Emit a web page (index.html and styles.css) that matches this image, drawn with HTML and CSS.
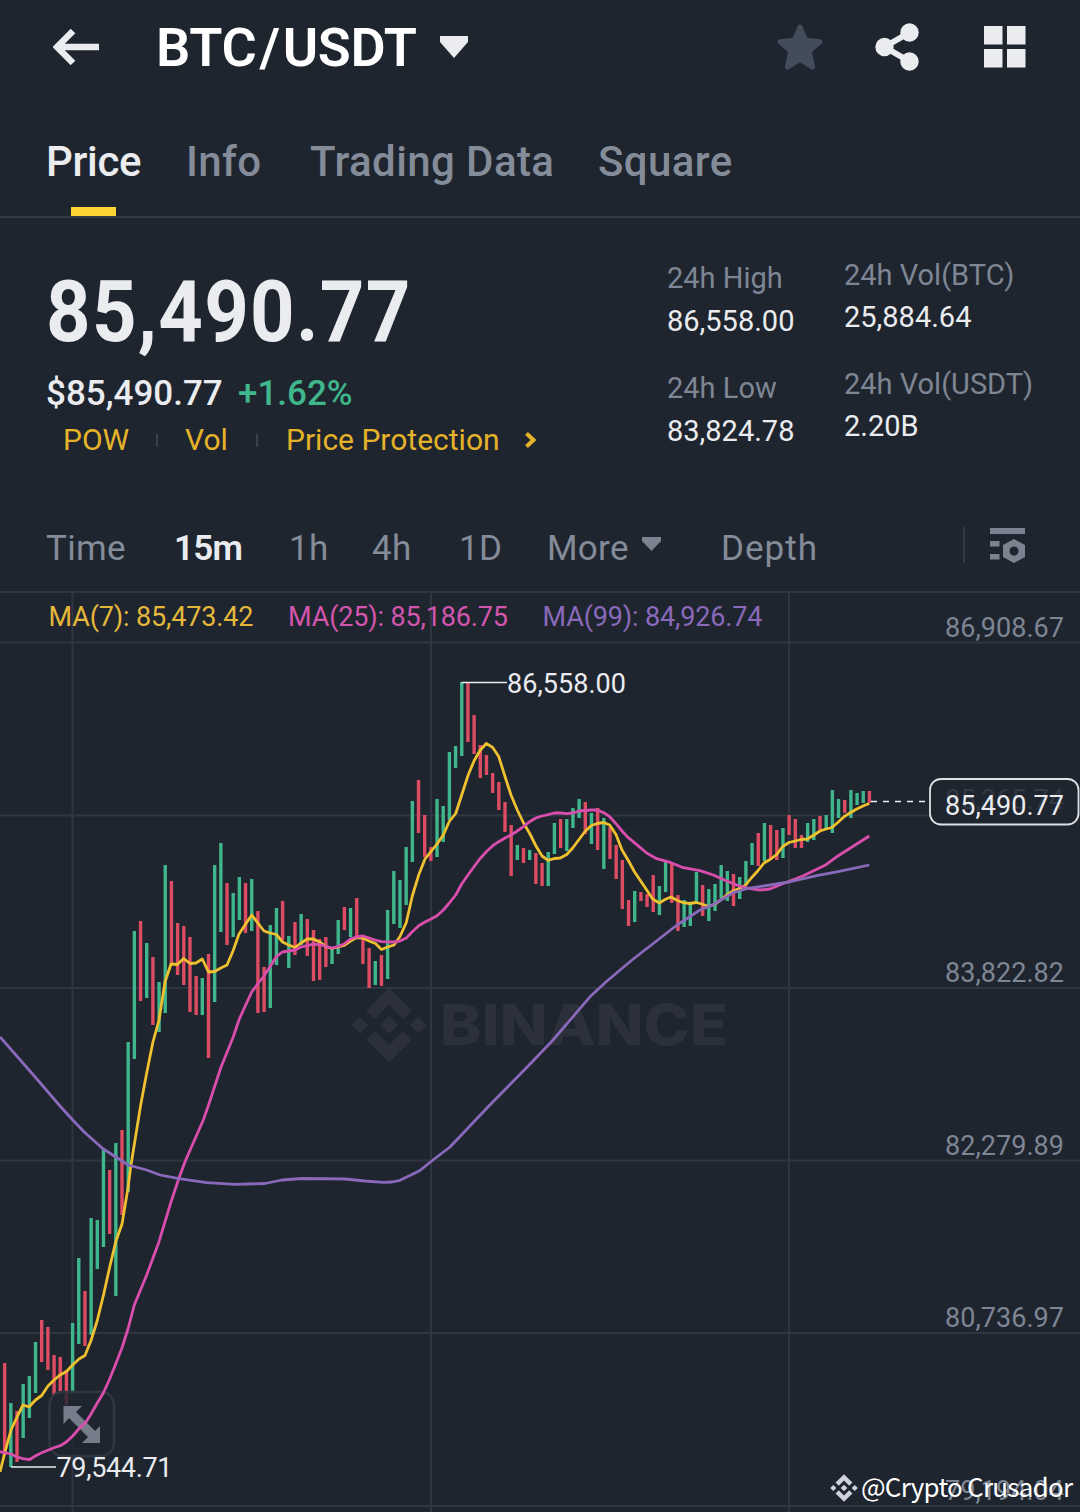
FILE: index.html
```html
<!DOCTYPE html>
<html lang="en">
<head>
    <meta charset="UTF-8">
    <title>BTC/USDT</title>
    <link rel="stylesheet" href="styles.css">
</head>
<body>
    <header class="topbar">
        <svg class="back" width="46" height="38" viewBox="0 0 46 38">
            <path d="M46 19H5M20 3L4 19L20 35" fill="none" stroke="#eaecef" stroke-width="6.5"/>
        </svg>
        <h1 class="pair">BTC<span>/</span>USDT</h1>
        <svg class="caret" width="28" height="22" viewBox="0 0 28 22">
            <path d="M0 0H28V6L14 22L0 6Z" fill="#eaecef"/>
        </svg>
        <div class="actions">
            <svg width="46" height="46" viewBox="0 0 46 46">
                <path d="M23 3L28.6 16.2L43 17.7L32.2 27.2L35.6 43L23 35.4L10.4 43L13.8 27.2L3 17.7L17.4 16.2Z" fill="#434c5a" stroke="#434c5a" stroke-width="5" stroke-linejoin="round"/>
            </svg>
            <svg width="44" height="48" viewBox="0 0 44 48">
                <path d="M34.500 9.500L9.500 24L34.500 38.500" fill="none" stroke="#eaecef" stroke-width="6"/>
                <g fill="#eaecef">
                    <circle cx="34.500" cy="9.500" r="9.200"/>
                    <circle cx="9.500" cy="24" r="9.200"/>
                    <circle cx="34.500" cy="38.500" r="9.200"/>
                </g>
            </svg>
            <svg width="42" height="42" viewBox="0 0 42 42">
                <path d="M0 0H18.500V18.500H0ZM23 0H41.500V18.500H23ZM0 23H18.500V41.500H0ZM23 23H41.500V41.500H23Z" fill="#eaecef"/>
            </svg>
        </div>
    </header>

    <nav class="tabs">
        <a class="tab active">Price</a>
        <a class="tab">Info</a>
        <a class="tab">Trading Data</a>
        <a class="tab">Square</a>
    </nav>

    <section class="summary">
        <div class="quote">
            <div class="last">85,490.77</div>
            <div class="fiat"><span class="usd">$85,490.77</span><span class="change">+1.62%</span></div>
            <div class="tags">
                <span class="pow">POW</span><i></i><span class="vol">Vol</span><i></i><span class="protect">Price Protection</span>
                <svg width="11" height="16" viewBox="0 0 11 16">
                    <path d="M1.500 1.500L8.500 8L1.500 14.500" fill="none" stroke="#e5b32a" stroke-width="4"/>
                </svg>
            </div>
        </div>
        <div class="stats range">
            <div class="stat"><label>24h High</label><b>86,558.00</b></div>
            <div class="stat"><label>24h Low</label><b>83,824.78</b></div>
        </div>
        <div class="stats volume">
            <div class="stat"><label>24h Vol(BTC)</label><b>25,884.64</b></div>
            <div class="stat"><label>24h Vol(USDT)</label><b>2.20B</b></div>
        </div>
    </section>

    <nav class="intervals">
        <a>Time</a>
        <a class="active">15m</a>
        <a>1h</a>
        <a>4h</a>
        <a>1D</a>
        <a class="more">More
            <svg width="19" height="14" viewBox="0 0 19 14"><path d="M0 0H19V4L9.500 14L0 4Z" fill="#7b8290"/></svg>
        </a>
        <a class="depth">Depth</a>
        <span class="settings">
            <svg width="36" height="36" viewBox="0 0 36 36" fill="#7b8290">
                <path d="M0 1H35V7H0ZM0 14H9.500V19.500H0ZM0 27H9.500V32.500H0Z"/>
                <path fill-rule="evenodd" d="M24 12L35 18V30L24 36L13 30V18ZM24 19.500a4.500 4.500 0 1 0 0.010 0Z"/>
            </svg>
        </span>
    </nav>

    <main class="chart">
        <svg width="1080" height="921" viewBox="0 591 1080 921">
            <path class="grid" d="M0 592H1080M0 642.500H1080M0 815.500H1080M0 988H1080M0 1160.500H1080M0 1333H1080M0 1506H1080M72.500 591V1512M431 591V1512M789 591V1512"/>

            <!-- logo watermark -->
            <g class="brand">
                <path transform="translate(389 1025) scale(37.500)" d="M0-1L.61-.39L.38-.16L0-.54L-.38-.16L-.61-.39ZM0 1L.61 .39L.38 .16L0 .54L-.38 .16L-.61 .39ZM-1 0L-.78-.22L-.55 0L-.78 .22ZM1 0L.78-.22L.55 0L.78 .22ZM0-.24L.24 0L0 .24L-.24 0Z"/>
                <text x="440" y="1045" textLength="288" lengthAdjust="spacingAndGlyphs">BINANCE</text>
            </g>

            <g id="candles"></g>

            <g class="expand">
                <rect x="49.500" y="1392" width="64.500" height="64" rx="13"/>
                <path d="M63.500 1406H82L76 1412L95 1431L100 1426V1443H82L88 1437L69 1418L63.500 1424Z"/>
            </g>

            <polyline class="ma ma7" points="0,1472 4.7,1453 11,1430 17,1417 23,1405 29,1407 35.5,1400 41.7,1395.5 48,1386 54,1380 60,1375 66.5,1371.5 72.6,1365 79,1359 85,1355.5 91,1340.5 97,1321.5 103.5,1295 109.7,1267 115.8,1241.5 122,1224 128,1188 130.7,1166.7 140.7,1105 146.7,1073 152.7,1043 159,1020 165,982 171,964 177.3,964.5 183.7,958.5 190,963.5 196,963 202.3,959 208.5,972 214.7,971.5 220.8,968 227,965 233,951 239,934 245.7,924 251.8,915 257.8,923 264,931 270,933 276.4,934.5 282.5,942 288.7,945 295,947.5 301,943 307.3,939 313.5,939 319.5,942 325.8,946.5 331.8,948.5 338,947 344,945.5 350.5,941 356.7,937.5 363,938 369,941 375.5,943.5 381.5,949.5 387.7,947 394,945 400,936.5 406.3,922.5 412.3,896 418.7,875 425,859 431,851.5 437,844 443.3,835 449.3,821.5 455.7,813.5 461.7,795 468,775.5 474,761 480,750.5 486.3,743.5 492.7,747.5 498.7,756.5 505,776.5 511,795 517.3,810 523.3,822.5 529.7,833.5 535.7,845.5 542,856 548,860.3 554.3,858.5 560.3,858 566.7,854.5 572.7,848 579,839.5 585,831.5 591.3,825.5 597.3,823.5 603.7,822.5 609.7,825 616,834.5 622,850 628.3,860.5 634.3,871.5 640,880 646.7,890 652.7,899 659.3,903 665,899.5 671,897 677.3,900.5 683.3,902.7 689.7,903.5 696,902.5 702,904 708.3,906.5 714.3,904.5 720.7,900 726.7,895 733,891 739.3,888.5 745.3,885.5 751.7,877.5 757.7,871 764,863 770,859.5 776.7,854.5 782.7,846.5 789,842.5 795,841 801,839.5 807.3,839 813.3,835.5 820,831 826,829 832,827.5 838.3,822 844.3,816.5 850.7,812.5 856.7,809 863,806 869.3,803.5"/>
            <polyline class="ma ma25" points="0,1451.7 11,1454 17,1457 23,1458.7 29.3,1459.7 35.3,1456 41.7,1452.7 53.3,1448 60.3,1445.7 66.3,1442 72.7,1436 78.7,1429 86,1422 91,1414 97.3,1403 103.3,1393 109.7,1379 115.7,1364 122,1347.7 128,1329 134.3,1305 146.7,1275 159,1241.7 171.3,1201 179,1178 185,1161.7 203.3,1120 208.3,1105.7 220.7,1068 233.3,1036.7 239.3,1019 245.7,1005 251.7,992 257.7,984 264,976 270,966.7 276.3,956.7 282.3,952 288.7,951 295,950 301,947 307.3,945.7 313.3,944 321.7,945 331.7,948 338,946.5 344,944 350.3,939 356.7,937 363,936 375.3,940 381.3,941.7 394,942 400,941 406.3,938 412.3,931.7 418.7,925.7 425,922 431,919 437,915.7 443.3,910 449.3,903 455.7,895 461.7,884 468,875 474,866.7 480,858.7 486.3,851.7 492.7,845.7 498.7,841.7 505,838 511,835 517.3,831 523.3,826.7 529.7,821.7 535.7,818 542,816 548,814.7 554.3,813 560.3,813 566.7,813.7 572.7,813 579,811 591.3,810 597.3,810 603.7,812.7 609.7,816.7 616,823.7 622,831 628.3,837.7 640,847.3 646.7,853 656.7,858.7 671,862.7 683.3,867.7 700,870.7 713.3,875 726.7,881 739.3,886 750,888.7 760,890 770,889 782.7,883.7 803.3,875.7 826,864.7 838.3,855.7 856.7,844 869.3,836"/>
            <polyline class="ma ma99" points="0,1037 36,1078 60,1106 72.7,1120 85,1132.7 103,1148.7 122,1161 128,1165 146.7,1170 160,1175 179,1178.7 206.7,1182.7 235,1184.3 265,1183.5 282,1180 302,1178.5 345,1179 365,1181 383,1182.3 392,1182 400,1180.3 413,1174 420,1170.5 431,1161.5 450,1147 486,1109 533,1061 553,1040 573,1016.7 591,995.7 607,981 632,960 659,939 677,925 700,910 713,904.7 733,892.7 746.7,888.7 770,885 789,882 816.7,875.7 838,871.7 869.3,865"/>

            <path class="leader" d="M461.500 682.500H507M11 1467H56"/>
            <text class="extreme" x="507" y="693" textLength="119">86,558.00</text>
            <text class="extreme" x="56.500" y="1477" textLength="116">79,544.71</text>

            <g class="legend">
                <text class="l7" x="48.500" y="626" textLength="205">MA(7): 85,473.42</text>
                <text class="l25" x="288" y="626" textLength="220">MA(25): 85,186.75</text>
                <text class="l99" x="542.500" y="626" textLength="220">MA(99): 84,926.74</text>
            </g>

            <g class="axis">
                <text x="945" y="637" textLength="119">86,908.67</text>
                <text x="945" y="982" textLength="119">83,822.82</text>
                <text x="945" y="1155" textLength="119">82,279.89</text>
                <text x="945" y="1327" textLength="119">80,736.97</text>
                <text x="945" y="1500" textLength="119">79,194.04</text>
            </g>

            <path class="last-line" d="M871 801.500H929"/>
            <rect class="last-box" x="930" y="779" width="148.500" height="45.500" rx="11"/>
            <text class="under" x="945" y="809" textLength="119">85,365.74</text>
            <text class="extreme" x="945" y="815" textLength="119">85,490.77</text>

            <g class="author">
                <path transform="translate(844 1488) scale(13.800)" d="M0-1L.61-.39L.38-.16L0-.54L-.38-.16L-.61-.39ZM0 1L.61 .39L.38 .16L0 .54L-.38 .16L-.61 .39ZM-1 0L-.78-.22L-.55 0L-.78 .22ZM1 0L.78-.22L.55 0L.78 .22ZM0-.24L.24 0L0 .24L-.24 0Z"/>
                <text x="861" y="1497" textLength="212">@Crypto Crusador</text>
            </g>
        </svg>
    </main>

    <script src="script.js"></script>
</body>
</html>
```
FILE: styles.css
```css
* {
    box-sizing: border-box;
}

body {
    margin: 0;
    width: 1080px;
    height: 1512px;
    overflow: hidden;
    background-color: #1f252f;
    color: #eaecef;
    font-family: Roboto, "Liberation Sans", sans-serif;
}

svg {
    display: block;
    flex: none;
}

/* top bar */
.topbar {
    display: flex;
    align-items: center;
    height: 96px;
    padding: 0 54px 3px 53px;
}

.pair {
    margin: 3px 0 0 57px;
    width: 284px;
    font-size: 54px;
    font-weight: 600;
    line-height: 64px;
    letter-spacing: -0.3px;
    color: #fff;
}

.pair span {
    margin: 0 3px;
}

.actions {
    display: flex;
    align-items: center;
    margin-left: auto;
}

.actions svg:nth-child(2) {
    margin: 0 65px 0 52px;
}

/* section tabs */
.tabs {
    display: grid;
    grid-template-columns: 140px 124px 288px 1fr;
    height: 122px;
    padding-left: 46px;
    border-bottom: 2px solid #343a45;
}

.tab {
    position: relative;
    justify-self: start;
    font-size: 42px;
    font-weight: 500;
    line-height: 132px;
    letter-spacing: 0.4px;
    color: #848b99;
}

.tab.active {
    letter-spacing: -0.3px;
    color: #eaecef;
}

.tab.active::after {
    content: "";
    position: absolute;
    left: 25px;
    bottom: 12px;
    width: 45px;
    height: 9px;
    background-color: #fcd535;
}

/* price and 24h numbers */
.summary {
    display: flex;
    height: 282px;
    padding-left: 46px;
}

.quote {
    width: 621px;
    padding-top: 44px;
}

.last {
    width: 440px;
    font-size: 85px;
    font-weight: 700;
    line-height: 100px;
    letter-spacing: 1.4px;
    transform: scaleX(0.915);
    transform-origin: left;
}

.fiat {
    display: flex;
    gap: 16px;
    font-size: 35px;
    font-weight: 500;
    line-height: 64px;
}

.usd {
    width: 176px;
}

.change {
    color: #3fb68b;
}

.tags {
    display: flex;
    align-items: center;
    margin-top: -2px;
    padding-left: 17px;
    font-size: 30px;
    line-height: 32px;
    color: #e5b32a;
}

.tags i {
    width: 2px;
    height: 13px;
    background-color: #39404c;
}

.pow {
    width: 93px;
}

.vol {
    width: 71px;
    margin-left: 27px;
    flex: none;
}

.protect {
    margin-left: 28px;
    width: 239px;
}

.stats {
    display: flex;
    flex-direction: column;
    gap: 24px;
    padding-top: 40px;
}

.volume {
    gap: 25px;
    padding-top: 37px;
    white-space: nowrap;
}

.range {
    width: 177px;
}

.stat label,
.stat b {
    display: block;
    font-size: 29px;
    font-weight: 400;
    line-height: 40px;
}

.stat label {
    color: #7e8593;
}

.stat b {
    line-height: 46px;
}

.volume b {
    line-height: 44px;
}

/* chart intervals */
.intervals {
    display: grid;
    grid-template-columns: 128px 115px 83px 87px 88px 174px 242px 1fr;
    align-items: center;
    height: 91px;
    padding: 5px 0 0 46px;
    font-size: 35px;
    letter-spacing: 0.3px;
    color: #848b99;
}

.intervals .active {
    color: #eaecef;
    font-weight: 600;
    letter-spacing: -0.8px;
}

.intervals .depth {
    letter-spacing: 1px;
}

.more {
    display: flex;
    align-items: center;
    gap: 13px;
}

.more svg {
    margin-top: -8px;
}

.settings {
    margin-top: -6px;
    padding-left: 25px;
    border-left: 2px solid #343a45;
}

/* chart */
.chart {
    height: 921px;
}

.grid {
    fill: none;
    stroke: #303641;
    stroke-width: 2;
}

.brand {
    fill: #2b303b;
}

.brand text {
    font: 800 57px Inter, sans-serif;
}

.candle {
    stroke: #3fb68b;
    stroke-width: 3.4;
}

.candle.down {
    stroke: #dc4c63;
}

.expand rect {
    fill: #1f252f;
    fill-opacity: 0.8;
    stroke: #303742;
    stroke-width: 2.5;
}

.expand path {
    fill: #767d8a;
}

.ma {
    fill: none;
    stroke-width: 2.8;
    stroke-linejoin: round;
}

.ma7 {
    stroke: #efc02f;
}

.ma25 {
    stroke: #d94ead;
}

.ma99 {
    stroke: #8a69bb;
}

.leader {
    stroke: #eaecef;
    stroke-width: 1.6;
}

.extreme,
.legend,
.axis,
.under {
    font-size: 27px;
}

.extreme {
    fill: #eaecef;
}

.l7 {
    fill: #e5b83b;
}

.l25 {
    fill: #d256ae;
}

.l99 {
    fill: #8a69bb;
}

.axis {
    fill: #7e8593;
}

.under {
    fill: #323843;
}

.last-line {
    stroke: #eaecef;
    stroke-width: 1.6;
    stroke-dasharray: 6 6;
}

.last-box {
    fill: #1f252f;
    stroke: #dfe1e6;
    stroke-width: 1.8;
}

.author path {
    fill: #cfd2da;
}

.author text {
    font: 26px "Noto Sans CJK SC", sans-serif;
    fill: #fff;
}
```
FILE: script.js
```js
// high and low of each candle in chart pixels, "u" = up, "d" = down
var candles = [
    ['d', 1363, 1455], ['u', 1403, 1467], ['d', 1411, 1462], ['u', 1384, 1438], ['u', 1376, 1418],
    ['u', 1342, 1393], ['d', 1320, 1362], ['d', 1327, 1370], ['d', 1355, 1395], ['d', 1357, 1392],
    ['d', 1370, 1405], ['u', 1323, 1391], ['u', 1258, 1344], ['d', 1291, 1346], ['u', 1218, 1335],
    ['u', 1220, 1269], ['u', 1148, 1247], ['d', 1170, 1234], ['u', 1143, 1296], ['d', 1130, 1215],
    ['u', 1042, 1192], ['u', 931, 1059], ['d', 921, 1001], ['u', 943, 998], ['d', 957, 1025],
    ['u', 982, 1032], ['u', 865, 1013], ['d', 881, 965], ['d', 923, 975], ['d', 926, 985],
    ['d', 937, 1012], ['d', 976, 1015], ['u', 978, 1015], ['d', 954, 1058], ['u', 865, 1002],
    ['u', 843, 932], ['d', 883, 945], ['u', 893, 937], ['u', 877, 920], ['d', 883, 933],
    ['u', 879, 931], ['d', 911, 1013], ['d', 967, 1012], ['u', 925, 1008], ['u', 908, 965],
    ['d', 901, 940], ['u', 936, 968], ['d', 922, 955], ['u', 914, 945], ['d', 919, 956],
    ['d', 930, 981], ['d', 939, 980], ['d', 937, 967], ['u', 947, 964], ['u', 920, 954],
    ['d', 907, 930], ['u', 908, 937], ['d', 898, 937], ['d', 938, 964], ['d', 948, 988],
    ['u', 961, 985], ['d', 955, 986], ['u', 910, 979], ['u', 871, 924], ['u', 880, 928],
    ['u', 847, 905], ['u', 801, 862], ['d', 780, 833], ['d', 815, 857], ['d', 847, 861],
    ['u', 799, 857], ['u', 806, 842], ['u', 752, 820], ['u', 746, 768], ['u', 682, 756],
    ['d', 683, 742], ['d', 715, 754], ['d', 745, 778], ['d', 755, 775], ['d', 773, 793],
    ['d', 782, 810], ['d', 802, 832], ['d', 825, 876], ['u', 845, 860], ['d', 848, 863],
    ['u', 850, 860], ['d', 853, 884], ['d', 863, 886], ['u', 852, 886], ['u', 823, 854],
    ['d', 819, 848], ['u', 819, 851], ['u', 808, 828], ['u', 799, 818], ['d', 802, 834],
    ['u', 813, 844], ['d', 808, 850], ['u', 818, 869], ['d', 827, 859], ['d', 845, 879],
    ['d', 860, 909], ['d', 900, 926], ['u', 891, 922], ['d', 892, 901], ['d', 894, 907],
    ['d', 875, 912], ['u', 886, 915], ['u', 862, 892], ['d', 863, 903], ['d', 895, 931],
    ['u', 900, 927], ['u', 903, 926], ['u', 872, 903], ['d', 885, 916], ['u', 889, 921],
    ['u', 884, 911], ['u', 865, 898], ['u', 871, 901], ['d', 874, 906], ['u', 877, 899],
    ['u', 861, 885], ['u', 843, 865], ['d', 833, 866], ['u', 823, 861], ['d', 825, 860],
    ['d', 830, 860], ['u', 828, 858], ['d', 815, 835], ['d', 819, 848], ['d', 835, 848],
    ['u', 823, 842], ['u', 819, 840], ['d', 816, 830], ['u', 815, 828], ['u', 790, 833],
    ['u', 799, 818], ['d', 800, 813], ['u', 790, 818], ['u', 793, 805], ['u', 791, 803],
    ['d', 791, 803]
];

var group = document.getElementById('candles');

candles.forEach(function(candle, i) {
    var x = 4.65 + i * 6.177;
    var line = document.createElementNS('http://www.w3.org/2000/svg', 'line');
    line.setAttribute('class', candle[0] === 'd' ? 'candle down' : 'candle');
    line.setAttribute('x1', x);
    line.setAttribute('x2', x);
    line.setAttribute('y1', candle[1]);
    line.setAttribute('y2', candle[2]);
    group.appendChild(line);
});
```
